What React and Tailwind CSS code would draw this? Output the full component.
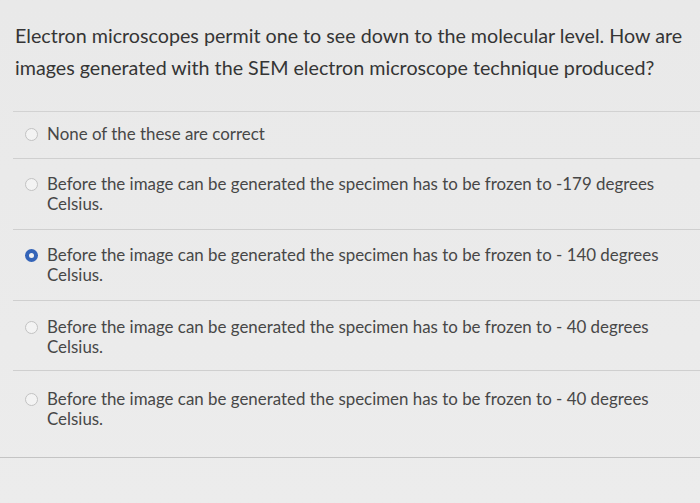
import React from "react";

function Radio({ selected }) {
  if (selected) {
    return (
      <span className="mt-[4px] flex h-[13px] w-[13px] shrink-0 items-center justify-center rounded-full bg-[#3464b8]">
        <span className="h-[5px] w-[5px] rounded-full bg-[#f2f2f2]" />
      </span>
    );
  }
  return (
    <span className="mt-[4px] h-[13px] w-[13px] shrink-0 rounded-full border border-[#c2c2c2] bg-[#f3f3f3]" />
  );
}

function Option({ text, selected, className }) {
  return (
    <div className={"ml-[13px] flex gap-[9px] border-b border-[#cfcfcf] pl-[12px] pr-[20px] " + className}>
      <Radio selected={selected} />
      <div className="text-[16.9px] leading-[20px] text-[#474747]">{text}</div>
    </div>
  );
}

export default function App() {
  return (
    <div
      className="h-[503px] w-[700px] overflow-hidden bg-gradient-to-b from-[#e9e9e9] to-[#ececec]"
      style={{ fontFamily: "Lato, 'Open Sans', sans-serif" }}
    >
      <div className="ml-[13px] border-b border-[#d2d2d2] pb-[27px] pl-[2px] pr-[6px] pt-[20px] text-[19.7px] leading-[32px] text-[#353535]">
        Electron microscopes permit one to see down to the molecular level. How are images generated with the SEM electron microscope technique produced?
      </div>
      <Option className="pb-[14px] pt-[12px]" text="None of the these are correct" />
      <Option
        className="pb-[15px] pt-[15px]"
        text="Before the image can be generated the specimen has to be frozen to -179 degrees Celsius."
      />
      <Option
        className="pb-[15px] pt-[15px]"
        selected
        text="Before the image can be generated the specimen has to be frozen to - 140 degrees Celsius."
      />
      <Option
        className="pb-[13px] pt-[16px]"
        text="Before the image can be generated the specimen has to be frozen to - 40 degrees Celsius."
      />
      <div className="border-b border-[#c4c4c4] pb-[28px] pl-[25px] pr-[20px] pt-[18px]">
        <div className="flex gap-[9px]">
          <Radio />
          <div className="text-[16.9px] leading-[20px] text-[#474747]">
            Before the image can be generated the specimen has to be frozen to - 40 degrees Celsius.
          </div>
        </div>
      </div>
    </div>
  );
}
